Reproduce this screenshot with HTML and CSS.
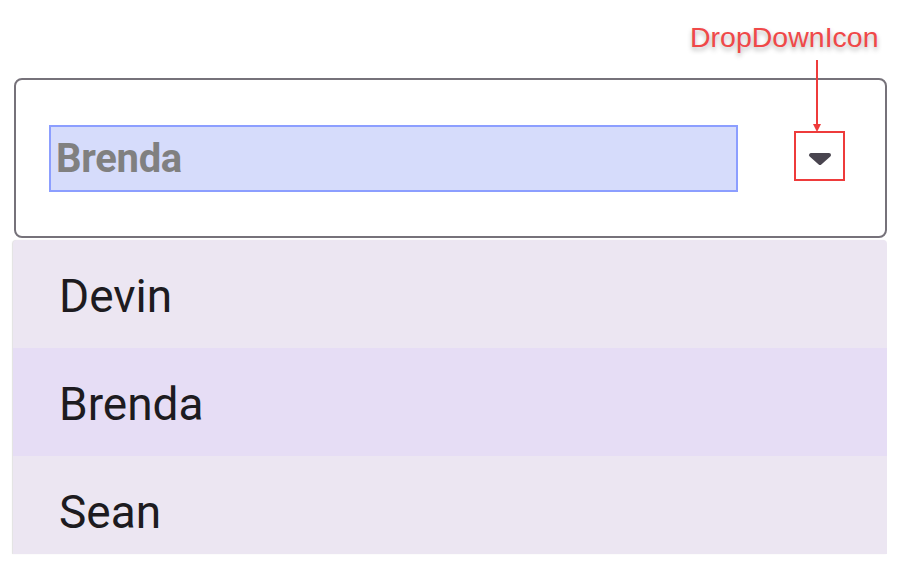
FILE: index.html
```html
<!DOCTYPE html>
<html>
<head>
<meta charset="utf-8">
<link rel="stylesheet" href="styles.css">
</head>
<body>
<div class="page">
  <div class="top-space"></div>
  <div class="field">
    <div class="selected-box"><span class="selected-text">Brenda</span></div>
    <div class="icon-slot">
      <svg class="drop-icon" viewBox="0 0 48 48" width="48" height="48"><path d="M15 21 L33 21 L24 29 Z" fill="#49454f" stroke="#49454f" stroke-width="4" stroke-linejoin="round"/></svg>
      <div class="icon-frame"></div>
    </div>
  </div>
  <div class="menu">
    <div class="item">Devin</div>
    <div class="item item-active">Brenda</div>
    <div class="item">Sean</div>
  </div>
  <div class="annotation">
    <div class="annotation-label">DropDownIcon</div>
    <svg class="annotation-arrow" width="14" height="74" viewBox="0 0 14 74"><line x1="7" y1="0" x2="7" y2="66" stroke="#ee3b3b" stroke-width="2"/><path d="M3 64 L7 72 L11 64 Z" fill="#ee3b3b"/></svg>
  </div>
</div>
</body>
</html>
```
FILE: styles.css
```css
* { box-sizing: border-box; }
html, body { margin: 0; padding: 0; background: #ffffff; }
body { width: 900px; height: 568px; overflow: hidden; font-family: Roboto, "Noto Sans", sans-serif; }
.page { position: relative; width: 900px; height: 568px; }
.top-space { height: 78px; }
.field {
  margin-left: 14px;
  width: 873px;
  height: 160px;
  border: 2px solid #76727a;
  border-radius: 8px;
  display: flex;
  align-items: center;
  padding-left: 33px;
}
.selected-box {
  width: 689px;
  height: 67px;
  background: #d6dcfb;
  border: 2px solid #8c9eff;
  display: flex;
  align-items: center;
  padding-left: 5px;
}
.selected-text {
  font-weight: 700;
  font-size: 40px;
  color: #808080;
  letter-spacing: -0.3px;
}
.icon-slot {
  position: relative;
  margin-left: 58px;
  width: 48px;
  height: 48px;
}
.drop-icon { display: block; }
.icon-frame {
  position: absolute;
  left: -2px; top: -3px;
  width: 51px; height: 50px;
  border: 2px solid #ee3b3b;
}
.menu {
  margin-top: 2px;
  margin-left: 13px;
  width: 874px;
  height: 314px;
  overflow: hidden;
  background: #ece6f2;
  border-radius: 4px 4px 0 0;
  box-shadow: -1px 0 1px rgba(0,0,0,0.12);
}
.item {
  height: 108px;
  display: flex;
  align-items: center;
  padding-left: 46px;
  padding-top: 4px;
  font-size: 46px;
  color: #1d1b20;
}
.item-active { background: #e6ddf5; }
.annotation {
  position: absolute;
  left: 690px;
  top: 21px;
  width: 200px;
}
.annotation-label {
  font-family: "Liberation Sans", Arial, sans-serif;
  font-size: 28.5px;
  color: #f04848;
  text-shadow: 0 3px 5px rgba(0,0,0,0.3);
  line-height: 32px;
  white-space: nowrap;
}
.annotation-arrow {
  position: absolute;
  left: 120px;
  top: 39px;
}
```
